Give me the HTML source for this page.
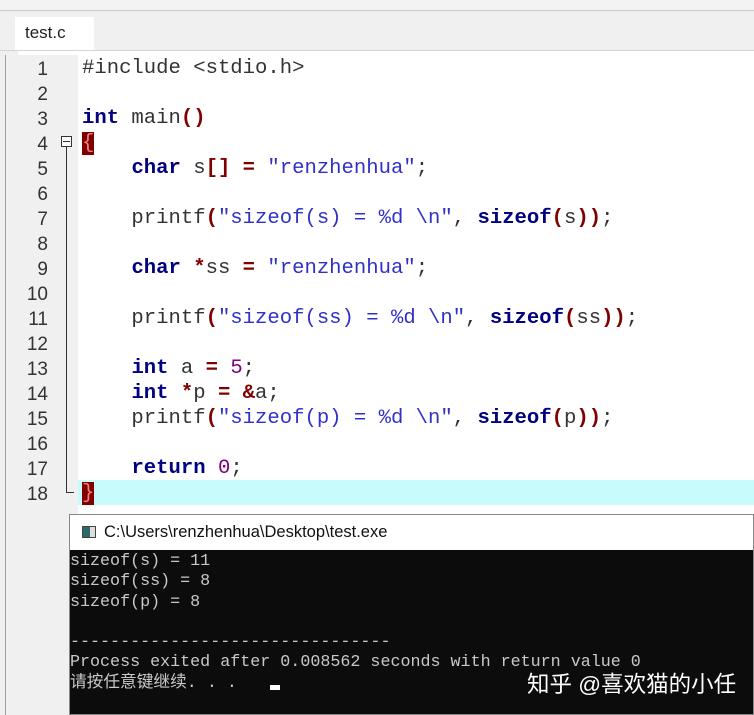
<!DOCTYPE html>
<html><head><meta charset="utf-8"><style>
*{margin:0;padding:0;box-sizing:border-box}
body{width:754px;height:715px;overflow:hidden;background:#f0f0f0;position:relative;font-family:"Liberation Sans",sans-serif}
.tb{position:absolute;left:0;top:0;width:754px;height:11px;background:#f3f3f3;border-bottom:1px solid #c8c8c8}
.tab{position:absolute;left:15px;top:17px;width:79px;height:34px;background:#fff;font-size:17px;color:#222;padding:6px 0 0 10px}
.tabline{position:absolute;left:0;top:50px;width:754px;height:1px;background:#d4d4d4}
.left{position:absolute;left:0;top:55px;width:6px;height:660px;border-right:1px solid #a0a0a0;background:#f0f0f0}
.ed{position:absolute;left:18px;top:51px;width:736px;height:664px;background:#fff}
.gut{position:absolute;left:18px;top:55px;width:60px;height:660px;background:#f0f0f0}
.ln{position:absolute;left:18px;width:30px;text-align:right;font:19px "Liberation Sans",sans-serif;color:#333}
.code{position:absolute;left:82px;font:20.6px "Liberation Mono",monospace;color:#333;white-space:pre;line-height:25px}
.k{color:#000080;font-weight:bold}.s{color:#3030c8}.o{color:#800000;font-weight:bold}.n{color:#800080}
.hl{position:absolute;left:78px;top:480px;width:676px;height:25px;background:#c8fcfc}
.br{background:#800000;color:#f08080}
.con{position:absolute;left:69px;top:514px;width:685px;height:201px;background:#0c0c0c;border:1px solid #888}
.ct{height:35px;background:#fff;font-size:16.5px;color:#111;padding:8px 0 0 34px;position:relative}
.ct i{position:absolute;left:12px;top:11px;width:14px;height:12px;border:1px solid #444;background:linear-gradient(90deg,#2a6a6a 60%,#ddd 60%)}
.cx{position:absolute;left:0;font:16.7px "Liberation Mono","Noto Sans CJK SC",monospace;color:#c8c8c8;white-space:pre;line-height:20.3px}
.wm{position:absolute;left:527px;top:667px;font:22.5px "Liberation Sans","Noto Sans CJK SC",sans-serif;color:#fff}
</style></head><body>
<div class="tb"></div>
<div class="tab">test.c</div>
<div class="tabline"></div>
<div class="left"></div>
<div class="ed"></div>
<div class="gut"></div>
<div class="hl"></div>
<div style="position:absolute;left:61px;top:136px;width:11px;height:11px;border:1px solid #333;background:#fff"></div>
<div style="position:absolute;left:63px;top:141px;width:7px;height:1px;background:#333"></div>
<div style="position:absolute;left:66px;top:147px;width:1px;height:345px;background:#333"></div>
<div style="position:absolute;left:66px;top:492px;width:8px;height:1px;background:#333"></div>
<div class="code" style="top:56px">#include &lt;stdio.h&gt;

<span class="k">int</span> main<span class="o">()</span>
<span class="br">{</span>
    <span class="k">char</span> s<span class="o">[]</span> <span class="o">=</span> <span class="s">"renzhenhua"</span>;

    printf<span class="o">(</span><span class="s">"sizeof(s) = %d \n"</span>, <span class="k">sizeof</span><span class="o">(</span>s<span class="o">))</span>;

    <span class="k">char</span> <span class="o">*</span>ss <span class="o">=</span> <span class="s">"renzhenhua"</span>;

    printf<span class="o">(</span><span class="s">"sizeof(ss) = %d \n"</span>, <span class="k">sizeof</span><span class="o">(</span>ss<span class="o">))</span>;

    <span class="k">int</span> a <span class="o">=</span> <span class="n">5</span>;
    <span class="k">int</span> <span class="o">*</span>p <span class="o">=</span> <span class="o">&amp;</span>a;
    printf<span class="o">(</span><span class="s">"sizeof(p) = %d \n"</span>, <span class="k">sizeof</span><span class="o">(</span>p<span class="o">))</span>;

    <span class="k">return</span> <span class="n">0</span>;
<span class="br">}</span></div>
<div class="ln" style="top:57px;line-height:25px;white-space:pre">1
2
3
4
5
6
7
8
9
10
11
12
13
14
15
16
17
18</div>
<div class="con">
<div class="ct"><i></i>C:\Users\renzhenhua\Desktop\test.exe</div>
<div class="cx" style="top:37px">sizeof(s) = 11
sizeof(ss) = 8
sizeof(p) = 8

--------------------------------
Process exited after 0.008562 seconds with return value 0
请按任意键继续. . . </div>
<div style="position:absolute;left:200px;top:170px;width:10px;height:5px;background:#fff"></div>
</div>
<div class="wm">知乎 @喜欢猫的小任</div>
</body></html>
